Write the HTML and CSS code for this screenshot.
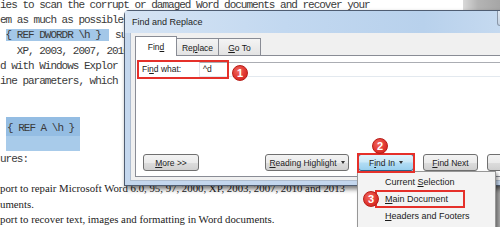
FILE: index.html
```html
<!DOCTYPE html>
<html>
<head>
<meta charset="utf-8">
<link rel="stylesheet" href="styles.css">
</head>
<body>
<div class="screen">
  <div class="page">
    <div class="mono">
      <div class="ln">ies to scan the corrupt or damaged Word documents and recover your</div>
      <div class="ln">em as much as possible,</div>
      <div class="ln"> <span class="fld">{ REF DWORDR \h } </span> su</div>
      <div class="ln">   XP, 2003, 2007, 2010</div>
      <div class="ln">d with Windows Explor</div>
      <div class="ln">ine parameters, which</div>
    </div>
    <div class="fldblock">{ REF A \h }</div>
    <div class="mono ures"><div class="ln">ures:</div></div>
    <div class="serif">
      <div class="sl">port to repair Microsoft Word 6.0, 95, 97, 2000, XP, 2003, 2007, 2010 and 2013</div>
      <div class="sl">uments.</div>
      <div class="sl">port to recover text, images and formatting in Word documents.</div>
    </div>
  </div>
  <div class="gutter"></div>

  <div class="dlg">
    <div class="titlebar">
      <span class="title">Find and Replace</span>
      <span class="closebtn"></span>
    </div>
    <div class="dbody">
      <div class="tabs">
        <div class="tab sel">Fin<u>d</u></div>
        <div class="tab">Re<u>p</u>lace</div>
        <div class="tab"><u>G</u>o To</div>
      </div>
      <div class="panel">
        <div class="findrow">
          <span class="label">Fi<u>n</u>d what:</span>
          <span class="input">^d</span>
        </div>
        <div class="btnrow">
          <div class="btn more"><u>M</u>ore &gt;&gt;</div>
          <div class="btn rh"><u>R</u>eading Highlight<span class="caret"></span></div>
          <div class="btn findin">F<u>i</u>nd In<span class="caret"></span></div>
          <div class="btn fnext"><u>F</u>ind Next</div>
          <div class="btn cancel"></div>
        </div>
      </div>
    </div>
  </div>

  <div class="menu">
    <div class="mi">Current <u>S</u>election</div>
    <div class="mi"><u>M</u>ain Document</div>
    <div class="mi"><u>H</u>eaders and Footers</div>
  </div>

  <div class="rbox rb1"></div>
  <div class="rbox rb2"></div>
  <div class="rbox rb3"></div>
  <div class="badge b1">1</div>
  <div class="badge b2">2</div>
  <div class="badge b3">3</div>
</div>
</body>
</html>
```

FILE: styles.css
```css
html, body {
  margin: 0;
  padding: 0;
}
body {
  width: 500px;
  height: 227px;
  overflow: hidden;
}
.screen {
  position: relative;
  width: 500px;
  height: 227px;
  overflow: hidden;
  display: flex;
}
.page {
  width: 463px;
  height: 227px;
  background: #fff;
  overflow: hidden;
  flex: none;
}
.gutter {
  flex: 1;
  background: linear-gradient(90deg, #d9d9d9, #b4b4b4 40%, #a6a6a6);
}
.mono {
  font-family: "Liberation Mono", monospace;
  font-size: 11px;
  letter-spacing: -1px;
  line-height: 15.3px;
  color: #3a3a3a;
  margin-top: -2.2px;
}
.ln {
  white-space: pre;
  height: 15.3px;
}
.fld {
  background: #a3c7e8;
  padding-right: 3px;
}
.fldblock {
  font-family: "Liberation Mono", monospace;
  font-size: 11px;
  letter-spacing: -1px;
  line-height: 15.3px;
  color: #3a3a3a;
  white-space: pre;
  margin-top: 27.4px;
  margin-left: 6px;
  width: 74px;
  height: 34px;
  box-sizing: border-box;
  padding-top: 4.5px;
  padding-left: 1px;
  background: linear-gradient(180deg, #94bde3 0%, #94bde3 55%, #a8cbea 56%, #a8cbea 100%);
}
.ures {
  margin-top: 1.4px;
}
.serif {
  font-family: "Liberation Serif", serif;
  font-size: 10.8px;
  line-height: 15.5px;
  color: #222;
  margin-top: 13.8px;
}
.sl {
  white-space: pre;
  height: 15.5px;
}

/* dialog */
.dlg {
  position: absolute;
  left: 124px;
  top: 10px;
  width: 400px;
  height: 176px;
  box-sizing: border-box;
  border: 1px solid rgba(50, 62, 82, 0.8);
  border-radius: 5px 5px 0 0;
  background: #c4d7ee;
  padding-bottom: 4px;
  display: flex;
  flex-direction: column;
  box-shadow: 2px 3px 5px rgba(0, 0, 0, 0.55);
  font-family: "Liberation Sans", Arial, sans-serif;
  color: #1a1a1a;
}
.titlebar {
  height: 22px;
  flex: none;
  display: flex;
  align-items: center;
  padding-left: 7px;
  background: linear-gradient(90deg, #d6e4f4 0%, #c2d8f0 40%, #b8d1ec 75%, #c9dcf1 100%);
}
.title {
  font-size: 9px;
  color: #1e1e1e;
}
.closebtn {
  margin-left: auto;
  align-self: flex-start;
  width: 26px;
  height: 15px;
  box-sizing: border-box;
  border: 1px solid #8a97a8;
  border-top: none;
  border-radius: 0 0 3px 3px;
  background: linear-gradient(#dfe7f1, #c5d3e3);
}
.dbody {
  flex: 1;
  margin-left: 5px;
  background: #f0f0f0;
  border-left: 1px solid #aebdd0;
  border-bottom: 1px solid #aebdd0;
  padding: 3px 0 3px 4px;
  display: flex;
  flex-direction: column;
}
.tabs {
  height: 20px;
  flex: none;
  display: flex;
  align-items: flex-end;
  margin-bottom: -1px;
  position: relative;
  z-index: 1;
  font-size: 8.5px;
}
.tab {
  box-sizing: border-box;
  height: 17px;
  margin-bottom: 1px;
  width: 42px;
  border: 1px solid #898c95;
  border-bottom: none;
  border-left: none;
  background: linear-gradient(#f4f4f4, #e3e3e3);
  display: flex;
  align-items: center;
  justify-content: center;
  padding-top: 2px;
}
.tab.sel {
  height: 20px;
  margin-bottom: 0;
  border-left: 1px solid #898c95;
  background: #fff;
  padding-top: 0;
}
.panel {
  height: 122px;
  flex: none;
  box-sizing: border-box;
  border: 1px solid #898c95;
  border-right: none;
  background: #fff;
  display: flex;
  flex-direction: column;
}
.findrow {
  margin-top: 6px;
  height: 15px;
  display: flex;
  padding-left: 6px;
  font-size: 8.5px;
}
.label {
  width: 57px;
  line-height: 15px;
}
.input {
  flex: 1;
  box-sizing: border-box;
  height: 15px;
  border: 1px solid #abadb3;
  border-color: #abadb3 #dbdfe6 #e3e9ef #e2e3ea;
  padding-left: 3px;
  line-height: 13px;
  font-size: 8.5px;
}
.btnrow {
  margin-top: auto;
  margin-bottom: 5px;
  display: flex;
  padding-left: 7px;
  font-size: 8.5px;
}
.btn {
  box-sizing: border-box;
  height: 17px;
  border: 1px solid #707070;
  border-radius: 3px;
  background: linear-gradient(#f3f3f3 0%, #ebebeb 50%, #dddddd 51%, #d0d0d0 100%);
  display: flex;
  align-items: center;
  justify-content: center;
  color: #222;
  flex: none;
}
.more { width: 56px; margin-right: 66px; }
.rh { width: 84px; margin-right: 9px; }
.findin {
  width: 56px;
  margin-right: 9px;
  border-color: #2c628b;
  background: linear-gradient(#e2f3fc 0%, #cbe9f8 45%, #b1dcf4 55%, #9ad0ee 100%);
}
.fnext { width: 55px; margin-right: 9px; }
.cancel { width: 60px; }
.caret {
  display: inline-block;
  width: 0;
  height: 0;
  border-left: 2.5px solid transparent;
  border-right: 2.5px solid transparent;
  border-top: 3px solid #333;
  margin-left: 4px;
}

/* dropdown menu */
.menu {
  position: absolute;
  left: 357px;
  top: 171px;
  width: 139px;
  height: 70px;
  box-sizing: border-box;
  border: 1px solid #979797;
  background: #f3f3f3;
  padding-top: 1.5px;
  box-shadow: 2px 2px 3px rgba(0, 0, 0, 0.35);
  font-family: "Liberation Sans", Arial, sans-serif;
  font-size: 9px;
  color: #1a1a1a;
}
.mi {
  height: 17.2px;
  line-height: 17.2px;
  padding-left: 27px;
  white-space: nowrap;
}

/* annotations */
.rbox {
  position: absolute;
  box-sizing: border-box;
  border: 2px solid #e5302a;
}
.rb1 { left: 137px; top: 60px; width: 92px; height: 19px; }
.rb2 { left: 357px; top: 153px; width: 58px; height: 20px; }
.rb3 { left: 375px; top: 190px; width: 90px; height: 18px; }
.badge {
  position: absolute;
  width: 16px;
  height: 16px;
  border-radius: 50%;
  box-sizing: border-box;
  border: 1px solid #b81c17;
  background: radial-gradient(circle at 40% 35%, #f26b63 0%, #e0362f 55%, #c9221c 100%);
  color: #fff;
  font-family: "Liberation Sans", Arial, sans-serif;
  font-weight: bold;
  font-size: 11px;
  line-height: 14px;
  text-align: center;
}
.b1 { left: 232px; top: 65px; }
.b2 { left: 372px; top: 138px; }
.b3 { left: 363px; top: 191px; }
```
